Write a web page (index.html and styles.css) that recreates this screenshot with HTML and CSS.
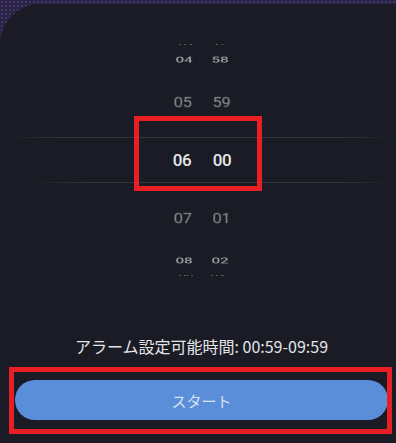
FILE: index.html
```html
<!DOCTYPE html>
<html lang="ja">
<head>
<meta charset="utf-8">
<link rel="stylesheet" href="styles.css">
</head>
<body>
<div class="sheet">
  <div class="picker">
    <div class="band"></div>
    <div class="row r-m3"><span>03</span><span>57</span></div>
    <div class="row r-m2"><span>04</span><span>58</span></div>
    <div class="row r-m1"><span>05</span><span>59</span></div>
    <div class="row r-0"><span>06</span><span>00</span></div>
    <div class="row r-p1"><span>07</span><span>01</span></div>
    <div class="row r-p2"><span>08</span><span>02</span></div>
    <div class="row r-p3"><span>09</span><span>03</span></div>
  </div>
  <p class="range">アラーム設定可能時間: 00:59-09:59</p>
  <button class="start">スタート</button>
</div>
<div class="mark mark-time"></div>
<div class="mark mark-btn"></div>
</body>
</html>
```
FILE: styles.css
```css
html, body {
  margin: 0;
  height: 100%;
}
body {
  position: relative;
  overflow: hidden;
  background-color: #2a2345;
  background-image: radial-gradient(circle, rgba(140, 120, 210, 0.35) 0.6px, transparent 1px);
  background-size: 4px 4px;
  font-family: "Noto Sans CJK JP", "Noto Sans", sans-serif;
}
.sheet {
  margin-top: 4px;
  height: 439px;
  box-sizing: border-box;
  padding: 0 8px 0 15px;
  background: #1a1b24;
  border-top-left-radius: 40px;
  display: flex;
  flex-direction: column;
}
.picker {
  height: 312px;
  display: grid;
  place-items: center;
  font-family: Roboto, "Noto Sans", sans-serif;
}
.picker > * {
  grid-area: 1 / 1;
}
.band {
  width: 378px;
  margin-left: -4px;
  height: 46px;
  background:
    linear-gradient(to right, rgba(60,62,70,0), #33353d 12%, #33353d 88%, rgba(60,62,70,0)) top / 100% 1px no-repeat,
    linear-gradient(to right, rgba(60,62,70,0) 5%, #33353d 20%, #33353d 88%, rgba(60,62,70,0)) bottom / 100% 1px no-repeat;
}
.row {
  display: flex;
  font-size: 17px;
  line-height: 20px;
  color: #8f9199;
  letter-spacing: -0.3px;
}
.row span {
  width: 40px;
  text-align: center;
}
.r-0 {
  color: #e6e7ea;
  font-weight: 500;
}
.r-m1 { transform: rotateX(30deg) translateZ(116px) scaleX(0.97); }
.r-m2 { transform: rotateX(60deg) translateZ(116px) scaleX(0.9); color: #9b9ca3; font-weight: 500; }
.r-m3 { transform: rotateX(85deg) translateZ(116px) scaleX(0.8); color: #70727a; }
.r-p1 { transform: rotateX(-30deg) translateZ(116px) scaleX(0.97); }
.r-p2 { transform: rotateX(-60deg) translateZ(116px) scaleX(0.9); color: #9b9ca3; font-weight: 500; }
.r-p3 { transform: rotateX(-85deg) translateZ(116px) scaleX(0.8); color: #70727a; }
.range {
  margin: 20px 0 0;
  line-height: 20px;
  font-size: 16px;
  color: #e3e4e7;
  text-align: center;
}
.start {
  margin-top: 24px;
  height: 40px;
  border: none;
  border-radius: 20px;
  background: #5b8ed9;
  color: #d8e2f3;
  font-family: "Noto Sans CJK JP", "Noto Sans", sans-serif;
  font-size: 15px;
  padding: 0;
}
.mark {
  position: absolute;
  box-sizing: border-box;
  border: 5px solid #e91f26;
}
.mark-time {
  left: 134px;
  top: 116px;
  width: 128px;
  height: 75px;
}
.mark-btn {
  left: 9px;
  top: 367px;
  width: 383px;
  height: 67px;
}
```
